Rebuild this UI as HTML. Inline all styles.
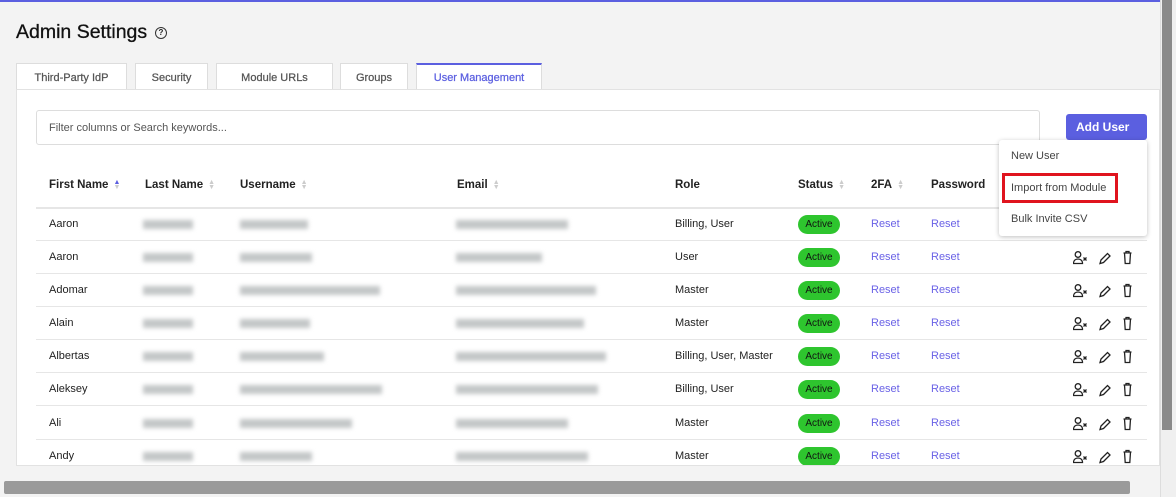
<!DOCTYPE html>
<html><head><style>
*{box-sizing:border-box;margin:0;padding:0}
body{width:1176px;height:497px;overflow:hidden;background:#f3f3f3;font-family:"Liberation Sans",sans-serif;position:relative;color:#222}
.top{position:absolute;left:0;top:0;width:1160px;height:2px;background:#5b5fe0}
h1{position:absolute;left:16px;top:21px;font-size:19.5px;font-weight:normal;color:#111;-webkit-text-stroke:0.3px #111}
.q{position:absolute;left:155px;top:27px;width:12px;height:12px;border:1.3px solid #333;border-radius:50%;font-size:8px;text-align:center;line-height:10px;font-weight:bold}
.tab{position:absolute;top:63px;height:27px;background:#fff;border:1px solid #ddd;border-bottom:none;font-size:11px;color:#555;text-align:center;line-height:28px;-webkit-text-stroke:0.25px #555}
.tab.a{border-top:2px solid #5b5fe0;color:#5b5fe0;line-height:26px;-webkit-text-stroke:0.25px #5b5fe0}
.panel{position:absolute;left:16px;top:89px;width:1144px;height:377px;background:#fff;border:1px solid #e2e2e2;overflow:hidden}
.search{position:absolute;left:36px;top:110px;width:1004px;height:35px;border:1px solid #ddd;border-radius:3px;background:#fff;font-size:11px;color:#555;padding:11px 12px}
.btn{position:absolute;left:1066px;top:114px;width:81px;height:26px;background:#5b5fe0;border-radius:3px;color:#fff;font-size:12px;font-weight:bold;padding:6px 10px}
.th{position:absolute;top:179px;font-size:11.5px;font-weight:bold;color:#222}
.ar{display:inline-block;margin-left:5px;vertical-align:-1px;font-size:7px;line-height:5px;color:#ccc}
.hl{position:absolute;left:19px;top:117px;width:1111px;height:2px;background:#e6e6e6}
.row{position:absolute;left:19px;width:1111px;height:33px;border-bottom:1px solid #e6e6e6;font-size:11px;color:#222}
.row span{position:absolute;top:10px}
.bl{position:absolute;height:9px;background:#c4c7c8;filter:blur(2px);top:12px}
.act{position:absolute;left:762px;top:7px;width:42px;height:19px;background:#2ec52e;border-radius:10px;font-size:10px;text-align:center;line-height:19px;color:#111}
.lk{color:#6a62e6}
.menu{position:absolute;left:999px;top:140px;width:148px;height:96px;background:#fff;box-shadow:0 1px 5px rgba(0,0,0,.25);border-radius:3px;font-size:11px;color:#444}
.menu div{position:absolute;left:12px}
.red{position:absolute;left:3px;top:33px;width:116px;height:30px;border:3px solid #e0141e}
.vs{position:absolute;left:1160px;top:0;width:16px;height:497px;background:#f0f0f0;border-left:1px solid #ddd}
.vt{position:absolute;left:1162px;top:0;width:10px;height:430px;background:#8a8a8a}
.hs{position:absolute;left:4px;top:481px;width:1126px;height:13px;background:#9a9a9a;border-radius:2px}
</style></head><body>
<div class="top"></div>
<h1>Admin Settings</h1><div class="q">?</div>
<div class="tab" style="left:16px;width:111px">Third-Party IdP</div>
<div class="tab" style="left:135px;width:73px">Security</div>
<div class="tab" style="left:216px;width:117px">Module URLs</div>
<div class="tab" style="left:340px;width:68px">Groups</div>
<div class="tab a" style="left:416px;width:126px">User Management</div>
<div class="panel"><div class="hl"></div><div id="rows"></div></div>
<div class="search">Filter columns or Search keywords...</div>
<div class="btn">Add User &nbsp;⌄</div>
<div class="th" style="left:49px">First Name<span class="ar"><span style="color:#5b5fe0">▲</span><br>▼</span></div>
<div class="th" style="left:145px">Last Name<span class="ar">▲<br>▼</span></div>
<div class="th" style="left:240px">Username<span class="ar">▲<br>▼</span></div>
<div class="th" style="left:457px">Email<span class="ar">▲<br>▼</span></div>
<div class="th" style="left:675px">Role</div>
<div class="th" style="left:798px">Status<span class="ar">▲<br>▼</span></div>
<div class="th" style="left:871px">2FA<span class="ar">▲<br>▼</span></div>
<div class="th" style="left:931px">Password</div>
<script>
var d=[["Aaron",118,"Billing, User",[50,68,112],0],["Aaron",151,"User",[50,72,86],1],["Adomar",184,"Master",[50,140,140],1],["Alain",217,"Master",[50,70,128],1],["Albertas",250,"Billing, User, Master",[50,84,150],1],["Aleksey",283,"Billing, User",[50,142,142],1],["Ali",317,"Master",[50,112,112],1],["Andy",350,"Master",[50,72,132],1]];
var ic='<svg style="position:absolute;left:1037px;top:9px" width="60" height="16" viewBox="0 0 60 16" fill="none" stroke="#222" stroke-width="1.3"><circle cx="5" cy="4.5" r="2.8"/><path d="M0.5 13.5c0-3 2-4.5 4.5-4.5s4.5 1.5 4.5 4.5z"/><path d="M10.5 7.5l3 3M13.5 7.5l-3 3"/><path d="M27 13.5l1-3.5 6.5-6.5 2.5 2.5-6.5 6.5z"/><path d="M50.5 3h8M53 3V1.5h3V3M51.5 3l.7 10.5h4.6L57.5 3"/></svg>';
var h='';d.forEach(function(r){var b=r[3];h+='<div class="row" style="top:'+r[1]+'px"><span style="left:13px">'+r[0]+'</span><i class="bl" style="left:107px;width:'+b[0]+'px"></i><i class="bl" style="left:204px;width:'+b[1]+'px"></i><i class="bl" style="left:420px;width:'+b[2]+'px"></i><span style="left:639px">'+r[2]+'</span><div class="act">Active</div><span class="lk" style="left:835px">Reset</span><span class="lk" style="left:895px">Reset</span>'+(r[4]?ic:'')+'</div>'});
document.getElementById('rows').innerHTML=h;
</script>
<div class="menu"><div style="top:10px">New User</div><div style="top:42px">Import from Module</div><div style="top:73px">Bulk Invite CSV</div><span class="red"></span></div>
<div class="vs"></div><div class="vt"></div>
<div class="hs"></div>
</body></html>
